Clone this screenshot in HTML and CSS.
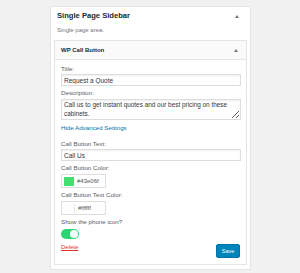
FILE: index.html
```html
<!DOCTYPE html>
<html lang="en">
<head>
  <meta charset="UTF-8" />
  <title>Single Page Sidebar</title>
  <link rel="stylesheet" href="styles.css">
</head>
<body>

<div class="sidebar">
  <div class="sidebar-head">
    <h2>Single Page Sidebar</h2>
    <span class="toggle-arrow"></span>
  </div>
  <p class="sidebar-desc">Single page area.</p>

  <!-- Widget -->
  <div class="widget">
    <div class="widget-head">
      <h3>WP Call Button</h3>
      <span class="toggle-arrow"></span>
    </div>

    <div class="widget-body">
      <label class="field-label first">Title:</label>
      <input class="text-input" type="text" value="Request a Quote">

      <label class="field-label">Description:</label>
      <textarea class="text-area">Call us to get instant quotes and our best pricing on these cabinets.</textarea>

      <a class="advanced-link" href="#">Hide Advanced Settings</a>

      <label class="field-label spaced">Call Button Text:</label>
      <input class="text-input" type="text" value="Call Us">

      <label class="field-label">Call Button Color:</label>
      <button class="color-btn"><span class="swatch green"></span><span class="color-val">#43e06f</span></button>

      <label class="field-label">Call Button Text Color:</label>
      <button class="color-btn"><span class="swatch white"></span><span class="color-val">#ffffff</span></button>

      <label class="field-label">Show the phone icon?</label>
      <span class="switch"><span class="knob"></span></span>

      <div class="widget-footer">
        <a class="delete-link" href="#">Delete</a>
        <button class="save-btn">Save</button>
      </div>
    </div>
  </div>
</div>

</body>
</html>
```

FILE: styles.css
```css
body {
  margin: 0;
  padding-top: 6px;
  background: #f1f1f1;
  font-family: "Liberation Sans", Arial, sans-serif;
  color: #23282d;
}
.sidebar {
  box-sizing: border-box;
  width: 201px;
  margin: 0 0 0 50px;
  background: #fff;
  border: 1px solid #e5e5e5;
  padding: 0 3px 4px;
}
.sidebar-head {
  display: flex;
  justify-content: space-between;
  align-items: center;
  padding: 4px 8px 0 3px;
}
.sidebar-head h2 {
  margin: 0;
  font-size: 7.6px;
  line-height: 10px;
  font-weight: bold;
}
.sidebar-desc {
  margin: 5px 0 6px 3px;
  font-size: 6px;
  line-height: 8px;
  color: #72777c;
}
/* small up-pointing caret */
.toggle-arrow {
  width: 0;
  height: 0;
  border-left: 2px solid transparent;
  border-right: 2px solid transparent;
  border-bottom: 3px solid #72777c;
}
.widget {
  border: 1px solid #e5e5e5;
  background: #fff;
}
.widget-head {
  display: flex;
  justify-content: space-between;
  align-items: center;
  height: 18px;
  padding: 0 8px 0 6px;
  background: #fafafa;
  border-bottom: 1px solid #e5e5e5;
}
.widget-head h3 {
  margin: 0;
  font-size: 6px;
  font-weight: bold;
}
.widget-body {
  display: flex;
  flex-direction: column;
  align-items: flex-start;
  padding: 0 5px 6px 6px;
}
.field-label {
  font-size: 6.2px;
  line-height: 8px;
  color: #555d66;
  margin: 3px 0 1px;
}
.field-label.first {
  margin-top: 5px;
}
.field-label.spaced {
  margin-top: 8px;
}
.text-input {
  box-sizing: border-box;
  width: 180px;
  height: 12px;
  margin: 0;
  padding: 0 2px;
  border: 1px solid #ddd;
  box-shadow: inset 0 1px 2px rgba(0,0,0,0.07);
  font-family: inherit;
  font-size: 6.5px;
  color: #32373c;
  outline: none;
}
.text-area {
  box-sizing: border-box;
  width: 180px;
  height: 21px;
  margin: 1px 0 0;
  padding: 0 2px;
  border: 1px solid #ddd;
  box-shadow: inset 0 1px 2px rgba(0,0,0,0.07);
  font-family: inherit;
  font-size: 6.4px;
  line-height: 9px;
  color: #32373c;
  overflow: hidden;
  resize: vertical;
}
.advanced-link {
  margin-top: 4px;
  font-size: 6.2px;
  line-height: 8px;
  color: #0073aa;
  text-decoration: none;
}
.color-btn {
  display: flex;
  align-items: center;
  box-sizing: border-box;
  width: 45px;
  height: 14px;
  margin: 1px 0 0;
  padding: 0 0 0 2px;
  background: #fff;
  border: 1px solid #ddd;
  border-radius: 1px;
  font-family: inherit;
}
.swatch {
  width: 10px;
  height: 9px;
}
.swatch.green {
  background: #43e06f;
}
.swatch.white {
  background: #fff;
  border-right: 1px solid #e5e5e5;
}
.color-val {
  margin-left: 3px;
  font-size: 6px;
  color: #555;
}
.switch {
  position: relative;
  width: 18px;
  height: 10px;
  margin-top: 2px;
  border-radius: 5px;
  background: #2ed573;
}
.switch .knob {
  position: absolute;
  right: 1px;
  top: 1px;
  width: 8px;
  height: 8px;
  border-radius: 50%;
  background: #fff;
}
.widget-footer {
  display: flex;
  justify-content: space-between;
  align-items: flex-start;
  align-self: stretch;
  margin-top: 4px;
  padding-right: 1px;
}
.delete-link {
  font-size: 6px;
  line-height: 8px;
  color: #dc3232;
  text-decoration: underline;
}
.save-btn {
  width: 24px;
  height: 14px;
  margin-top: 1px;
  padding: 0;
  background: #0085ba;
  border: 1px solid #0073aa;
  border-radius: 2px;
  color: #fff;
  font-family: inherit;
  font-size: 5.5px;
}
```
